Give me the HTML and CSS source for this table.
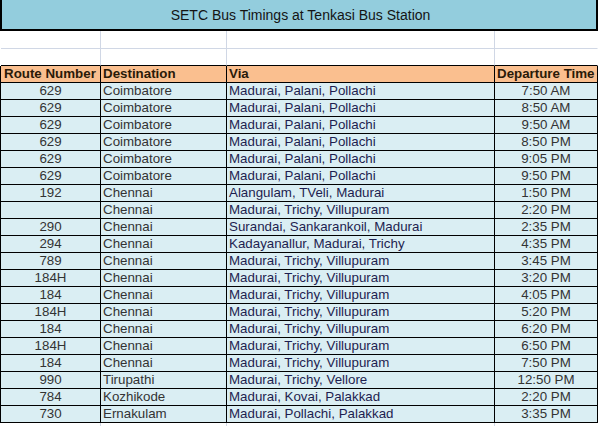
FILE: index.html
```html
<!DOCTYPE html>
<html>
<head>
<meta charset="utf-8">
<link rel="stylesheet" href="styles.css">
</head>
<body>
<div class="sheet">
  <div class="title">SETC Bus Timings at Tenkasi Bus Station</div>
  <div class="row blank first"><div></div><div></div><div></div><div></div></div>
  <div class="row blank second"><div></div><div></div><div></div><div></div></div>
  <div class="row head"><div>Route Number</div><div>Destination</div><div>Via</div><div>Departure Time</div></div>
  <div class="row data"><div class="c">629</div><div>Coimbatore</div><div class="via">Madurai, Palani, Pollachi</div><div class="c">7:50 AM</div></div>
  <div class="row data"><div class="c">629</div><div>Coimbatore</div><div class="via">Madurai, Palani, Pollachi</div><div class="c">8:50 AM</div></div>
  <div class="row data"><div class="c">629</div><div>Coimbatore</div><div class="via">Madurai, Palani, Pollachi</div><div class="c">9:50 AM</div></div>
  <div class="row data"><div class="c">629</div><div>Coimbatore</div><div class="via">Madurai, Palani, Pollachi</div><div class="c">8:50 PM</div></div>
  <div class="row data"><div class="c">629</div><div>Coimbatore</div><div class="via">Madurai, Palani, Pollachi</div><div class="c">9:05 PM</div></div>
  <div class="row data"><div class="c">629</div><div>Coimbatore</div><div class="via">Madurai, Palani, Pollachi</div><div class="c">9:50 PM</div></div>
  <div class="row data"><div class="c">192</div><div>Chennai</div><div class="via">Alangulam, TVeli, Madurai</div><div class="c">1:50 PM</div></div>
  <div class="row data"><div class="c"></div><div>Chennai</div><div class="via">Madurai, Trichy, Villupuram</div><div class="c">2:20 PM</div></div>
  <div class="row data"><div class="c">290</div><div>Chennai</div><div class="via">Surandai, Sankarankoil, Madurai</div><div class="c">2:35 PM</div></div>
  <div class="row data"><div class="c">294</div><div>Chennai</div><div class="via">Kadayanallur, Madurai, Trichy</div><div class="c">4:35 PM</div></div>
  <div class="row data"><div class="c">789</div><div>Chennai</div><div class="via">Madurai, Trichy, Villupuram</div><div class="c">3:45 PM</div></div>
  <div class="row data"><div class="c">184H</div><div>Chennai</div><div class="via">Madurai, Trichy, Villupuram</div><div class="c">3:20 PM</div></div>
  <div class="row data"><div class="c">184</div><div>Chennai</div><div class="via">Madurai, Trichy, Villupuram</div><div class="c">4:05 PM</div></div>
  <div class="row data"><div class="c">184H</div><div>Chennai</div><div class="via">Madurai, Trichy, Villupuram</div><div class="c">5:20 PM</div></div>
  <div class="row data"><div class="c">184</div><div>Chennai</div><div class="via">Madurai, Trichy, Villupuram</div><div class="c">6:20 PM</div></div>
  <div class="row data"><div class="c">184H</div><div>Chennai</div><div class="via">Madurai, Trichy, Villupuram</div><div class="c">6:50 PM</div></div>
  <div class="row data"><div class="c">184</div><div>Chennai</div><div class="via">Madurai, Trichy, Villupuram</div><div class="c">7:50 PM</div></div>
  <div class="row data"><div class="c">990</div><div>Tirupathi</div><div class="via">Madurai, Trichy, Vellore</div><div class="c">12:50 PM</div></div>
  <div class="row data"><div class="c">784</div><div>Kozhikode</div><div class="via">Madurai, Kovai, Palakkad</div><div class="c">2:20 PM</div></div>
  <div class="row data"><div class="c">730</div><div>Ernakulam</div><div class="via">Madurai, Pollachi, Palakkad</div><div class="c">3:35 PM</div></div>
  <div class="row blank tail"><div></div><div></div><div></div><div></div></div>
</div>
</body>
</html>
```
FILE: styles.css
```css
html, body {
  margin: 0;
  padding: 0;
  background: #ffffff;
}
body {
  width: 599px;
  height: 426px;
  overflow: hidden;
  font-family: "Liberation Sans", Arial, sans-serif;
  font-size: 13.33px;
}
.sheet {
  width: 598px;
}
.title {
  box-sizing: border-box;
  width: 598px;
  height: 31px;
  background: #93cddd;
  border-left: 2px solid #000;
  border-right: 2px solid #000;
  border-bottom: 2px solid #000;
  display: flex;
  align-items: center;
  justify-content: center;
  color: #141414;
  font-size: 14px;
  padding-top: 1px;
  padding-left: 3px;
}
.row {
  display: grid;
  grid-template-columns: 100px 126px 268px 103px;
  border-left: 1px solid #000;
}
.row > div {
  height: 16px;
  line-height: 16px;
  border-right: 1px solid #000;
  border-bottom: 1px solid #000;
  padding: 0 2px;
  white-space: nowrap;
  overflow: hidden;
}
.blank {
  border-left: 1px solid transparent;
}
.blank > div {
  border-right-color: #d0d7e5;
  border-bottom-color: #d0d7e5;
}
.blank > div:last-child {
  border-right-color: transparent;
}
.blank.first > div {
  height: 17px;
}
.blank.second > div {
  border-bottom-color: #000;
}
.blank.tail > div {
  border-bottom-color: transparent;
}
.head > div {
  background: #fabf8f;
  font-weight: bold;
  color: #2a1a08;
}
.head > div:first-child {
  padding-left: 3px;
}
.data > div {
  background: #daeef3;
  color: #333333;
}
.data > .c {
  text-align: center;
}
.data > .via {
  color: #1e1e50;
}
```
